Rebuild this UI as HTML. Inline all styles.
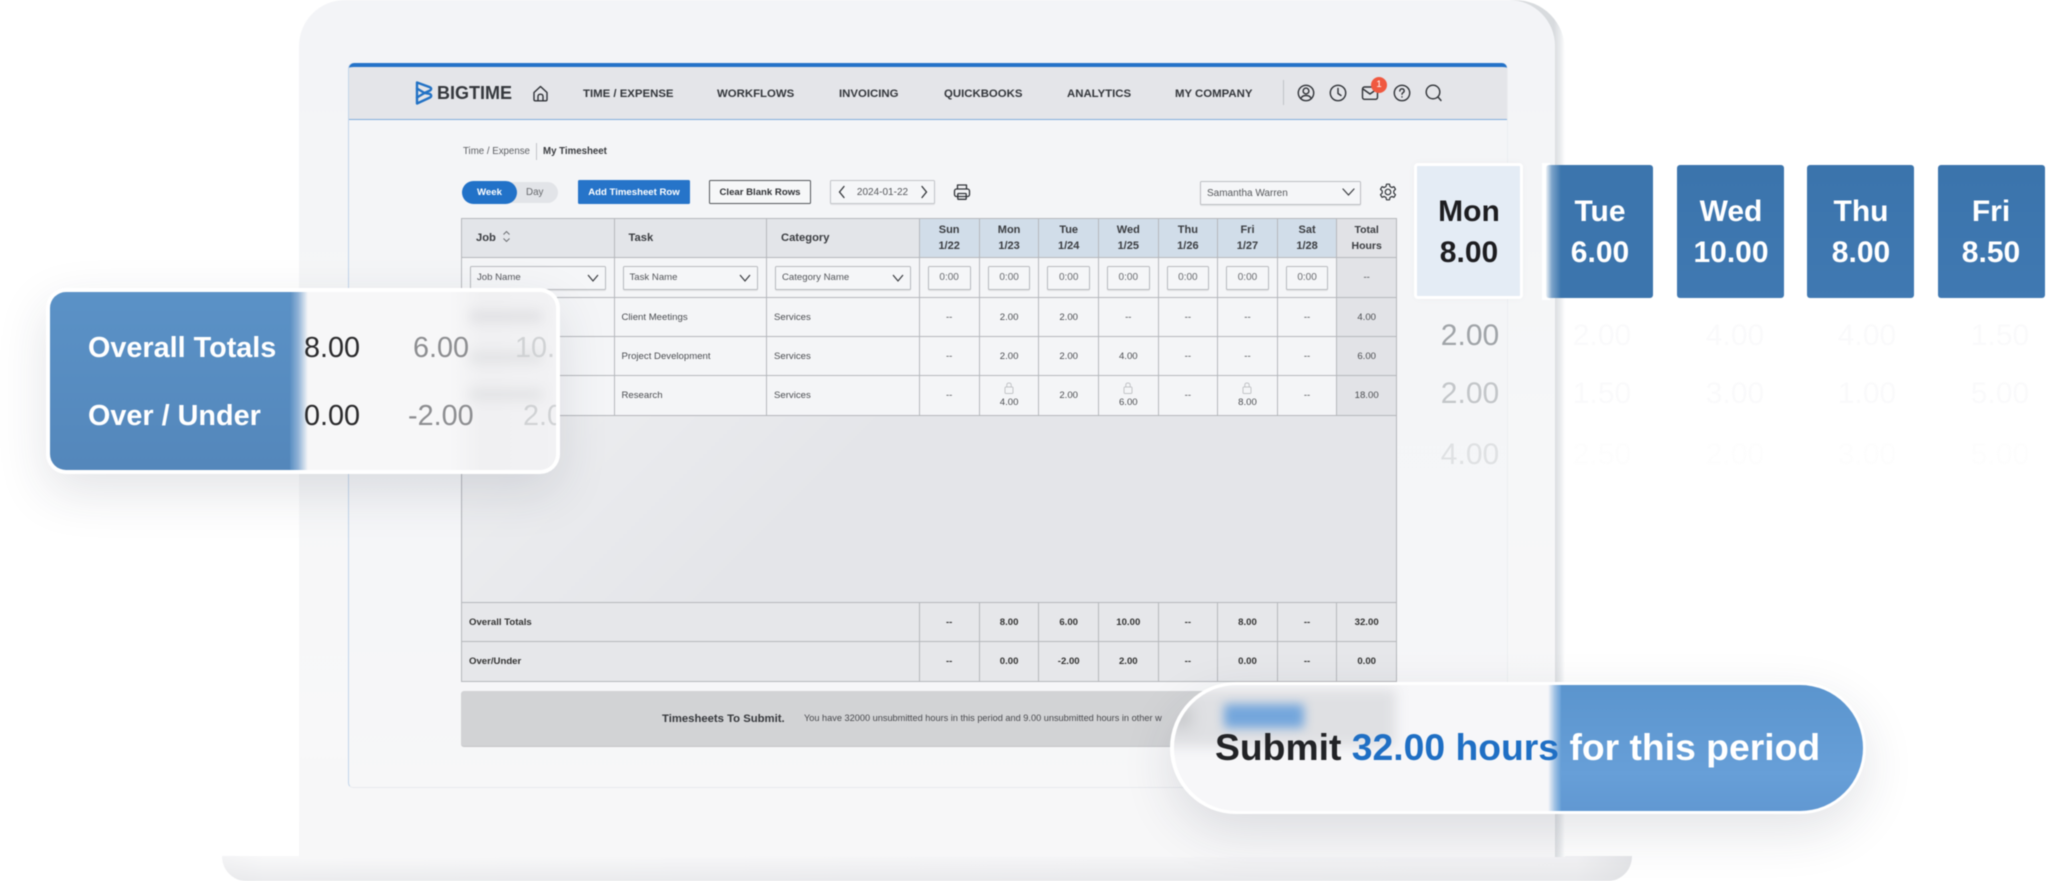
<!DOCTYPE html>
<html><head><meta charset="utf-8"><title>BigTime Timesheet</title>
<style>
html,body{margin:0;padding:0;background:#fff}
#r{position:relative;width:2048px;height:881px;overflow:hidden;background:#fff;font-family:"Liberation Sans",Arial,sans-serif;color:#333}
#r div,#r span,#r svg,#r table{box-sizing:border-box}
.a{position:absolute}
.t{position:absolute;white-space:nowrap;line-height:1}
#soft{position:absolute;left:0;top:0;width:2048px;height:881px;filter:blur(.5px)}
.nav{position:absolute;top:86.500px;font-size:11.400px;line-height:14px;font-weight:700;color:#33363b;white-space:nowrap}
table{position:absolute;left:461px;top:218px;width:935px;height:463px;border-collapse:collapse;table-layout:fixed;font-size:9.600px;color:#4a4c50}
td,th{border:1px solid #b6b8bc;padding:0;text-align:center;vertical-align:middle;overflow:hidden}
th{font-size:11px;line-height:16.500px;font-weight:700;color:#3b3d41;background:#d1dde9}
th.l{background:#e3e5e9;font-size:11.200px;text-align:left;padding-left:14px}
th.tot{background:#e1e2e6}
td.l{text-align:left;padding-left:7px}
td.tot{background:#e2e3e7}
tr.s td{background:#e6e7ea;color:#333;font-weight:700}
tr.s td.l{padding-left:7px}
.sel{display:block;position:relative;height:24px;margin:0 8px;background:#f5f6f8;border:1px solid #b9bbbf;border-radius:1.500px;text-align:left;padding-left:6px;line-height:22px;box-shadow:0 1px 1px rgba(0,0,0,.08);color:#54565a;font-weight:400}
.sel svg{position:absolute;right:6px;top:7px}
.inp{display:block;height:24px;margin:0 8px;background:#f5f6f8;border:1px solid #b9bbbf;border-radius:1.500px;line-height:22px;color:#6a6c70;font-size:10px;box-shadow:0 1px 1px rgba(0,0,0,.08)}
.lock{display:block;margin:-2px auto 3px}
.tile{position:absolute;top:165px;height:133px;width:107px;background:linear-gradient(180deg,#3b74ac,#4079b2);border-radius:3px}
.n{position:absolute;width:120px;text-align:center;font-size:30px;line-height:30px;white-space:nowrap}
.w{color:#fff;font-weight:700}
.f{color:#fafafb}
.g{color:#fdfdfd}
.c{position:absolute;font-size:28.800px;line-height:29px;white-space:nowrap}
</style></head>
<body><div id="r">
<div id="soft">

<!-- laptop base -->
<div class="a" style="left:222px;top:856px;width:1410px;height:25px;border-radius:0 0 24px 24px / 0 0 25px 25px;background:linear-gradient(90deg,#f1f1f3 0,#f7f7f8 3%,#f3f3f5 50%,#f1f1f3 96%,#dfe0e3 100%);"></div>
<div class="a" style="left:222px;top:856px;width:1410px;height:25px;border-radius:0 0 24px 24px / 0 0 25px 25px;background:linear-gradient(180deg,rgba(255,255,255,.2),rgba(225,226,229,.55));"></div>

<!-- laptop side band -->
<div class="a" style="left:1500px;top:0;width:65px;height:857px;border-radius:0 50px 0 0;background:linear-gradient(90deg,#d8dbde 0,#d8dbde 83%,#e9ebed 92%,#fff 100%);"></div>
<!-- laptop body -->
<div class="a" style="left:299px;top:0;width:1256px;height:857px;border-radius:46px 46px 0 0;background:linear-gradient(180deg,#f3f4f7 0,#f6f7f8 50%,#f8f8f9 85%,#f7f7f8 100%);"></div>

<!-- screen -->
<div class="a" style="left:348px;top:63px;width:1160px;height:725px;background:linear-gradient(180deg,#f4f5f7 0,#f5f6f8 70%,#f7f7f8 100%);border-left:1px solid #c2d5ea;border-right:1px solid #eceef1;border-bottom:1.500px solid #e8eaee;border-radius:5px;"></div>
<div class="a" style="left:349px;top:63px;width:1158px;height:57px;background:#e4e5e9;border-radius:5px 5px 0 0;border-top:4px solid #2472c8;border-bottom:1.500px solid #82addb;"></div>

<!-- logo -->
<svg class="a" style="left:414px;top:80px" width="19" height="26" viewBox="0 0 19 26" fill="none" stroke="#2272c5" stroke-width="2.400" stroke-linejoin="round" stroke-linecap="round"><path d="M3 2.500V23.500L16 17.500C17.600 16.600 17.500 15 16 14L10.500 13L16 10.500C17.500 9.500 17.500 8 16 7.300Z"/><path d="M3 8.500L10.500 13L3 17.500"/></svg>
<div class="t" style="left:437px;top:84px;font-size:18px;font-weight:700;color:#35383d;letter-spacing:0">BIGTIME</div>
<!-- home -->
<svg class="a" style="left:532px;top:85px" width="17" height="17" viewBox="0 0 17 17" fill="none" stroke="#2f3237" stroke-width="1.400" stroke-linejoin="round"><path d="M2 7.500L8.500 1.500L15 7.500V14.500Q15 15.800 13.700 15.800H3.300Q2 15.800 2 14.500Z"/><path d="M6 15.800V11.500Q6 9.200 8.500 9.200T11 11.500V15.800"/></svg>

<div class="nav" style="left:583px">TIME / EXPENSE</div>
<div class="nav" style="left:717px">WORKFLOWS</div>
<div class="nav" style="left:839px">INVOICING</div>
<div class="nav" style="left:944px">QUICKBOOKS</div>
<div class="nav" style="left:1067px">ANALYTICS</div>
<div class="nav" style="left:1175px">MY COMPANY</div>
<div class="a" style="left:1283px;top:80px;width:1px;height:25px;background:#c0c2c6"></div>

<!-- right icons -->
<svg class="a" style="left:1296px;top:83px" width="150" height="20" viewBox="0 0 150 20" fill="none" stroke="#2f3237" stroke-width="1.400" stroke-linecap="round" stroke-linejoin="round">
<circle cx="10" cy="10" r="7.700"/><circle cx="10" cy="8" r="2.900"/><path d="M4.800 15.500Q6 12.500 10 12.500T15.200 15.500"/>
<circle cx="42" cy="10" r="7.700"/><path d="M42 5.500V10.500L45 12.500"/>
<rect x="66.500" y="4" width="15" height="12.300" rx="2"/><path d="M67 6L74 11L81 6"/>
<circle cx="106" cy="10" r="7.700"/><path d="M103.800 8Q104 5.800 106 5.800T108.200 7.800Q108.200 9 106.800 9.800Q106 10.300 106 11.300"/><path d="M106 13.800V14"/>
<circle cx="137" cy="9" r="6.800"/><path d="M142 14L145 17.500"/>
</svg>
<div class="a" style="left:1371px;top:77px;width:16px;height:16px;border-radius:8px;background:#f0583f;color:#fff;font-size:9.500px;line-height:16px;text-align:center">1</div>

<!-- breadcrumbs -->
<div class="t" style="left:463px;top:147px;font-size:9.700px;color:#5c5e62">Time / Expense</div>
<div class="a" style="left:536px;top:143px;width:1px;height:17px;background:#c2c4c8"></div>
<div class="t" style="left:543px;top:147px;font-size:9.700px;font-weight:700;color:#3a3c40">My Timesheet</div>

<!-- toolbar -->
<div class="a" style="left:462px;top:182px;width:96px;height:21px;border-radius:11px;background:#e2e4e8"></div>
<div class="a" style="left:462px;top:181px;width:55px;height:23px;border-radius:12px;background:#2272c8;color:#fff;font-size:9.600px;font-weight:700;line-height:24px;text-align:center">Week</div>
<div class="t" style="left:526px;top:188px;font-size:9.800px;color:#66686c">Day</div>
<div class="a" style="left:578px;top:180px;width:112px;height:24px;background:#2674c9;border-radius:1.500px;color:#fff;font-size:9.600px;font-weight:700;line-height:26px;text-align:center">Add Timesheet Row</div>
<div class="a" style="left:709px;top:180px;width:102px;height:24px;background:#f6f7f8;border:1.500px solid #55585c;border-radius:1.500px;color:#2f3135;font-size:9.600px;font-weight:700;line-height:23px;text-align:center">Clear Blank Rows</div>
<div class="a" style="left:830px;top:180px;width:105px;height:24px;background:#f5f6f8;border:1px solid #c3c5c9;border-radius:1.500px;box-shadow:0 1px 1px rgba(0,0,0,.08);color:#55575b;font-size:10px;line-height:23px;text-align:center">2024-01-22</div>
<svg class="a" style="left:838px;top:185px" width="90" height="14" viewBox="0 0 90 14" fill="none" stroke="#33363a" stroke-width="1.300" stroke-linecap="round"><path d="M6 1.500L1.500 7L6 12.500"/><path d="M84 1.500L88.500 7L84 12.500"/></svg>
<svg class="a" style="left:953px;top:183px" width="18" height="18" viewBox="0 0 18 18" fill="none" stroke="#2f3237" stroke-width="1.300" stroke-linejoin="round"><path d="M4.500 6V2H13.500V6"/><rect x="1.500" y="6" width="15" height="7.500" rx="2"/><rect x="4.800" y="10.500" width="8.400" height="5.800" rx=".6"/></svg>

<div class="a" style="left:1200px;top:180.500px;width:161px;height:24px;background:#f5f6f8;border:1px solid #bdbfc3;border-radius:1.500px;box-shadow:0 1px 1px rgba(0,0,0,.08);color:#54565a;font-size:10px;line-height:23px;padding-left:6px">Samantha Warren</div>
<svg class="a" style="left:1342px;top:188px" width="13" height="8" viewBox="0 0 13 8" fill="none" stroke="#3a3c40" stroke-width="1.200" stroke-linecap="round"><path d="M1 1L6.500 7L12 1"/></svg>
<svg class="a" style="left:1379px;top:183px" width="18" height="18" viewBox="0 0 18 18" fill="none" stroke="#2f3237" stroke-width="1.200" stroke-linejoin="round"><path d="M7.500 1.200H10.500L11 3.500L12.800 4.500L15 3.700L16.500 6.300L14.800 7.900V10.100L16.500 11.700L15 14.300L12.800 13.500L11 14.500L10.500 16.800H7.500L7 14.500L5.200 13.500L3 14.300L1.500 11.700L3.200 10.100V7.900L1.500 6.300L3 3.700L5.200 4.500L7 3.500Z"/><circle cx="9" cy="9" r="2.800"/></svg>

<!-- table -->
<table>
<colgroup><col style="width:152.500px"><col style="width:152.500px"><col style="width:152.500px"><col style="width:60.300px"><col style="width:59.600px"><col style="width:59.600px"><col style="width:59.600px"><col style="width:59.600px"><col style="width:59.600px"><col style="width:59.600px"><col style="width:59.600px"></colgroup>
<tr style="height:39px"><th class="l">Job &nbsp;<svg width="9" height="13" viewBox="0 0 9 13" fill="none" stroke="#66686c" stroke-width=".9" style="vertical-align:-2px"><path d="M1.500 4.500L4.500 1.500L7.500 4.500"/><path d="M1.500 8.500L4.500 11.500L7.500 8.500"/></svg></th><th class="l">Task</th><th class="l">Category</th><th>Sun<br>1/22</th><th>Mon<br>1/23</th><th>Tue<br>1/24</th><th>Wed<br>1/25</th><th>Thu<br>1/26</th><th>Fri<br>1/27</th><th>Sat<br>1/28</th><th class="tot" style="font-size:10.500px">Total<br>Hours</th></tr>
<tr style="height:40px"><td><span class="sel">Job Name<svg width="12" height="8" viewBox="0 0 12 8" fill="none" stroke="#3a3c40" stroke-width="1.200"><path d="M1 1L6 7L11 1"/></svg></span></td><td><span class="sel">Task Name<svg width="12" height="8" viewBox="0 0 12 8" fill="none" stroke="#3a3c40" stroke-width="1.200"><path d="M1 1L6 7L11 1"/></svg></span></td><td><span class="sel">Category Name<svg width="12" height="8" viewBox="0 0 12 8" fill="none" stroke="#3a3c40" stroke-width="1.200"><path d="M1 1L6 7L11 1"/></svg></span></td><td><span class="inp">0:00</span></td><td><span class="inp">0:00</span></td><td><span class="inp">0:00</span></td><td><span class="inp">0:00</span></td><td><span class="inp">0:00</span></td><td><span class="inp">0:00</span></td><td><span class="inp">0:00</span></td><td class="tot">--</td></tr>
<tr style="height:39px"><td class="l">&nbsp;</td><td class="l">Client Meetings</td><td class="l">Services</td><td>--</td><td>2.00</td><td>2.00</td><td>--</td><td>--</td><td>--</td><td>--</td><td class="tot">4.00</td></tr>
<tr style="height:39px"><td class="l">&nbsp;</td><td class="l">Project Development</td><td class="l">Services</td><td>--</td><td>2.00</td><td>2.00</td><td>4.00</td><td>--</td><td>--</td><td>--</td><td class="tot">6.00</td></tr>
<tr style="height:40px"><td class="l">&nbsp;</td><td class="l">Research</td><td class="l">Services</td><td>--</td><td><svg class="lock" width="10" height="12" viewBox="0 0 10 12" fill="none" stroke="#c2c4c7"><rect x="1" y="5" width="8" height="6.500" rx="1"/><path d="M2.800 5V3Q2.800 1 5 1T7.200 3V5"/></svg>4.00</td><td>2.00</td><td><svg class="lock" width="10" height="12" viewBox="0 0 10 12" fill="none" stroke="#c2c4c7"><rect x="1" y="5" width="8" height="6.500" rx="1"/><path d="M2.800 5V3Q2.800 1 5 1T7.200 3V5"/></svg>6.00</td><td>--</td><td><svg class="lock" width="10" height="12" viewBox="0 0 10 12" fill="none" stroke="#c2c4c7"><rect x="1" y="5" width="8" height="6.500" rx="1"/><path d="M2.800 5V3Q2.800 1 5 1T7.200 3V5"/></svg>8.00</td><td>--</td><td class="tot">18.00</td></tr>
<tr style="height:187px"><td colspan="11" style="background:linear-gradient(135deg,#eeeff1 0,#e4e5e9 40%,#e4e5e9 100%)"></td></tr>
<tr class="s" style="height:39px"><td class="l" colspan="3">Overall Totals</td><td>--</td><td>8.00</td><td>6.00</td><td>10.00</td><td>--</td><td>8.00</td><td>--</td><td>32.00</td></tr>
<tr class="s" style="height:40px"><td class="l" colspan="3">Over/Under</td><td>--</td><td>0.00</td><td>-2.00</td><td>2.00</td><td>--</td><td>0.00</td><td>--</td><td>0.00</td></tr>
</table>

<!-- submit bar -->
<div class="a" style="left:461px;top:691px;width:935px;height:56px;background:#d2d3d5;border-bottom:1px solid #c4c5c8;border-radius:3px"></div>
<div class="t" style="left:662px;top:713.500px;font-size:11.300px;font-weight:700;color:#36383c">Timesheets To Submit.</div>
<div class="t" style="left:804px;top:714px;font-size:9.200px;color:#48494d">You have 32000 unsubmitted hours in this period and 9.00 unsubmitted hours in other w</div>

<!-- right columns -->
<div class="a" style="left:1414px;top:163px;width:109px;height:136px;background:#e4ecf5;border:3px solid #fff;border-radius:4px;box-shadow:0 0 8px rgba(0,0,0,.03)"></div>
<div class="n" style="left:1409px;top:197px;color:#1d1d20;font-weight:700">Mon</div>
<div class="n" style="left:1409px;top:238px;color:#1d1d20;font-weight:700">8.00</div>

<div class="a" style="left:1542px;top:163px;width:8px;height:137px;background:#fff"></div>
<div class="tile" style="left:1546px;width:107px;background:linear-gradient(90deg,#eef3f8 0,#7aa2c9 6px,#3c75ad 15px,#3c75ad 100%)"></div>
<div class="tile" style="left:1677px"></div>
<div class="tile" style="left:1807px"></div>
<div class="tile" style="left:1938px"></div>
<div class="n w" style="left:1540px;top:197px">Tue</div><div class="n w" style="left:1540px;top:238px">6.00</div>
<div class="n w" style="left:1671px;top:197px">Wed</div><div class="n w" style="left:1671px;top:238px">10.00</div>
<div class="n w" style="left:1801px;top:197px">Thu</div><div class="n w" style="left:1801px;top:238px">8.00</div>
<div class="n w" style="left:1931px;top:197px">Fri</div><div class="n w" style="left:1931px;top:238px">8.50</div>

<div class="n" style="left:1410px;top:321px;color:#a0a4a8">2.00</div>
<div class="n" style="left:1410px;top:379px;color:#c3c6c9">2.00</div>
<div class="n" style="left:1410px;top:440px;color:#dfe1e3">4.00</div>

<div class="n f" style="left:1542px;top:321px">2.00</div><div class="n f" style="left:1675px;top:321px">4.00</div><div class="n f" style="left:1807px;top:321px">4.00</div><div class="n f" style="left:1940px;top:321px">1.50</div>
<div class="n f" style="left:1542px;top:379px">1.50</div><div class="n f" style="left:1675px;top:379px">3.00</div><div class="n f" style="left:1807px;top:379px">1.00</div><div class="n f" style="left:1940px;top:379px">5.00</div>
<div class="n g" style="left:1542px;top:440px">2.50</div><div class="n g" style="left:1675px;top:440px">2.00</div><div class="n g" style="left:1807px;top:440px">3.00</div><div class="n g" style="left:1940px;top:440px">5.00</div>

<!-- left card -->
<div class="a" style="left:46px;top:288px;width:514px;height:186px;border-radius:20px;background:#fff;box-shadow:0 18px 50px rgba(40,50,70,.13)"></div>
<div class="a" style="left:50px;top:292px;width:506px;height:178px;border-radius:16px;overflow:hidden;background:#f7f7f8">
 <div class="a" style="left:400px;top:0;width:106px;height:178px;background:linear-gradient(90deg,rgba(238,238,240,0),#f0f0f2 30%,#f2f2f4 100%)"></div>
 <div class="a" style="left:420px;top:20px;width:72px;height:9px;background:#dcdcdf;filter:blur(6px)"></div>
 <div class="a" style="left:420px;top:61px;width:72px;height:9px;background:#dedfe1;filter:blur(6px)"></div>
 <div class="a" style="left:420px;top:98px;width:72px;height:9px;background:#dedfe1;filter:blur(6px)"></div>
 <div class="a" style="left:0;top:0;width:241px;height:178px;background:linear-gradient(180deg,#5b92c7,#5487bb)"></div>
 <div class="a" style="left:240px;top:0;width:18px;height:178px;background:linear-gradient(90deg,#5a8ec2,#8fb2d6 45%,rgba(247,247,248,0))"></div>
 <div class="c" style="left:38px;top:41.500px;color:#fff;font-weight:700">Overall Totals</div>
 <div class="c" style="left:38px;top:110px;color:#fff;font-weight:700">Over / Under</div>
 <div class="c" style="left:254px;top:41.500px;color:#2a2a2c">8.00</div>
 <div class="c" style="left:254px;top:110px;color:#2a2a2c">0.00</div>
 <div class="c" style="left:363px;top:41.500px;color:#8d8e91">6.00</div>
 <div class="c" style="left:358px;top:110px;color:#8d8e91">-2.00</div>
 <div class="c" style="left:465px;top:41.500px;color:#d0d2d4">10.00</div>
 <div class="c" style="left:473px;top:110px;color:#d0d2d4">2.00</div>
</div>

<!-- submit pill -->
<div class="a" style="left:1170px;top:682px;width:696px;height:132px;border-radius:66px;background:#fff;box-shadow:0 18px 50px rgba(40,50,70,.13)"></div>
<div class="a" style="left:1174px;top:685px;width:689px;height:126px;border-radius:63px;overflow:hidden;background:#f7f7f9">
 <div class="a" style="left:-30px;top:4px;width:252px;height:58px;background:#dfe0e3;filter:blur(6px)"></div>
 <div class="a" style="left:50px;top:19px;width:80px;height:24px;background:#74a6dc;border-radius:3px;filter:blur(5px)"></div>
 <div class="a" style="left:-6px;top:21px;width:24px;height:22px;background:#c9cacd;filter:blur(7px)"></div>
 <div class="a" style="left:386px;top:0;width:303px;height:126px;background:linear-gradient(180deg,#5b95ce,#679fd8 70%,#6198d2)"></div>
 <div class="a" style="left:374px;top:0;width:13px;height:126px;background:linear-gradient(90deg,rgba(247,247,249,0),#9cbfe3 55%,#679fd6)"></div>
</div>
<div class="t" style="left:1215px;top:728.500px;font-size:37.300px;line-height:37px;font-weight:700;color:#222326">Submit <span style="color:#1f6fc4">32.00 hours</span> <span style="color:#fff">for this period</span></div>

</div>
</div></body></html>
